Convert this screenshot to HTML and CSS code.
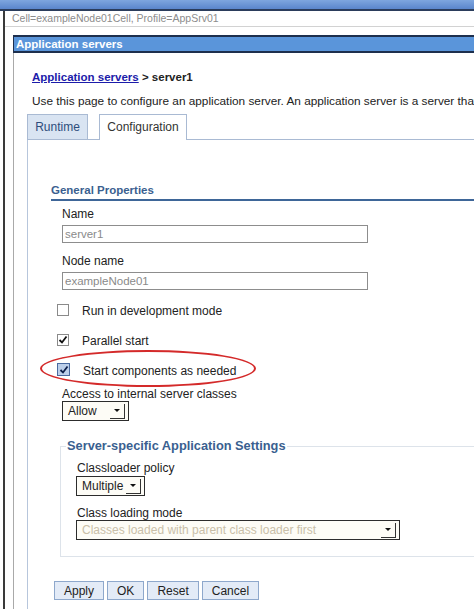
FILE: index.html
```html
<!DOCTYPE html>
<html lang="en">
<head>
  <meta charset="UTF-8" />
  <title>Application servers</title>
  <link rel="stylesheet" href="styles.css">
</head>
<body>
  <div class="titlebar"></div>
  <div class="window">
    <div class="scope">Cell=exampleNode01Cell, Profile=AppSrv01</div>

    <div class="portlet">
      <div class="portlet-title">Application servers</div>
      <div class="portlet-body">
        <div class="breadcrumb"><a href="#">Application servers</a> &gt; server1</div>
        <p class="intro">Use this page to configure an application server. An application server is a server that provides services required to run enterprise applications.</p>

        <!-- Tabs -->
        <div class="tabs">
          <div class="tab">Runtime</div>
          <div class="tab active">Configuration</div>
        </div>

        <div class="tab-panel">
          <div class="section-title">General Properties</div>
          <div class="props">
            <div class="field-label">Name</div>
            <input class="text-input" type="text" value="server1" readonly>
            <div class="field-label spaced">Node name</div>
            <input class="text-input" type="text" value="exampleNode01" readonly>

            <div class="checks">
              <div class="check-row">
                <span class="box"></span>
                <span>Run in development mode</span>
              </div>
              <div class="check-row">
                <span class="box checked">
                  <svg width="10" height="10" viewBox="0 0 10 10"><polyline points="1.5,5 4,7.5 8.5,1.5" fill="none" stroke="#111" stroke-width="1.8"/></svg>
                </span>
                <span>Parallel start</span>
              </div>
              <div class="check-row">
                <span class="box checked focus">
                  <svg width="10" height="10" viewBox="0 0 10 10"><polyline points="1.5,5 4,7.5 8.5,1.5" fill="none" stroke="#0d1f4a" stroke-width="1.8"/></svg>
                </span>
                <span>Start components as needed</span>
                <div class="highlight"></div>
              </div>
            </div>

            <div class="field-label tight">Access to internal server classes</div>
            <div class="select allow">
              <span class="select-value">Allow</span>
              <span class="select-arrow"></span>
            </div>

            <fieldset class="settings">
              <legend>Server-specific Application Settings</legend>
              <div class="field-label first">Classloader policy</div>
              <div class="select multiple">
                <span class="select-value">Multiple</span>
                <span class="select-arrow"></span>
              </div>
              <div class="field-label loose">Class loading mode</div>
              <div class="select mode disabled">
                <span class="select-value">Classes loaded with parent class loader first</span>
                <span class="select-arrow"></span>
              </div>
            </fieldset>
          </div>

          <div class="buttons">
            <button type="button">Apply</button>
            <button type="button">OK</button>
            <button type="button">Reset</button>
            <button type="button">Cancel</button>
          </div>
        </div>
      </div>
    </div>
  </div>
</body>
</html>
```

FILE: styles.css
```css
body {
  margin: 0;
  height: 609px;
  overflow: hidden;
  background-color: white;
  font-family: "Liberation Sans", Arial, sans-serif;
  color: #222;
}

.titlebar {
  height: 9px;
  background: linear-gradient(to bottom, #7ea6df, #5a86cc);
  border-bottom: 2px solid #2b3d5c;
}

.window {
  margin-left: 3px;
  width: 640px;
  border-left: 2px solid #3a3a3a;
  padding-bottom: 80px;
}

.scope {
  height: 15px;
  line-height: 15px;
  padding-left: 7px;
  font-size: 10.5px;
  color: #8c8c8c;
  border-bottom: 1px solid #d2d2d2;
}

.portlet {
  margin: 8px 0 0 8px;
  border-left: 1px solid #a9a9a9;
}

.portlet-title {
  margin-left: -1px;
  height: 14px;
  line-height: 14px;
  padding-left: 2px;
  background-color: #5a95da;
  border-top: 2px solid #1d2f4d;
  border-bottom: 2px solid #1d2f4d;
  border-left: 1px solid #1d2f4d;
  color: white;
  font-size: 11.5px;
  font-weight: bold;
}

.portlet-body {
  padding: 16px 0 0 13px;
}

.breadcrumb {
  padding-left: 5px;
  line-height: 16px;
  font-size: 11.5px;
  font-weight: bold;
}

.breadcrumb a {
  color: #1c1caa;
}

.intro {
  margin: 8px 0 0;
  padding-left: 5px;
  line-height: 16px;
  font-size: 11.8px;
  white-space: nowrap;
}

.tabs {
  display: flex;
  align-items: flex-end;
  gap: 11px;
  height: 25px;
  margin-top: 5px;
  border-bottom: 1px solid #a9bad3;
}

.tab {
  width: 59px;
  height: 24px;
  line-height: 24px;
  text-align: center;
  font-size: 12px;
  color: #2e4d7c;
  background-color: #d9e4f2;
  border: 1px solid #a9bad3;
  border-bottom: none;
}

.tab.active {
  width: 86px;
  height: 25px;
  margin-bottom: -1px;
  color: #333;
  background-color: white;
}

.tab-panel {
  border-left: 1px solid #b7c6dc;
  padding: 43px 0 60px 23px;
}

.section-title {
  line-height: 14px;
  padding-bottom: 2px;
  border-bottom: 2px solid #3e6698;
  font-size: 11.5px;
  font-weight: bold;
  color: #3a5f90;
}

.props {
  padding-left: 11px;
}

.field-label {
  margin-top: 6px;
  line-height: 14px;
  font-size: 12px;
}

.field-label.spaced {
  margin-top: 11px;
}

.field-label.tight {
  margin-top: 1px;
}

.text-input {
  display: block;
  box-sizing: border-box;
  width: 306px;
  height: 18px;
  margin: 4px 0 0;
  padding: 0 2px;
  border: 1px solid #8d8d8d;
  font-family: "Liberation Sans", Arial, sans-serif;
  font-size: 11.5px;
  color: #8a8a8a;
  outline: none;
}

.checks {
  margin-top: 6px;
}

.check-row {
  position: relative;
  display: flex;
  align-items: center;
  gap: 13px;
  height: 30px;
  margin-left: -5px;
  font-size: 12px;
}

.box {
  box-sizing: border-box;
  display: flex;
  align-items: center;
  justify-content: center;
  width: 12px;
  height: 12px;
  margin-bottom: 3px;
  border: 1px solid #8a8a8a;
  background-color: white;
}

.box.focus {
  width: 13px;
  height: 13px;
  border-color: #4a6aa0;
  background-color: #bccfea;
}

.highlight {
  position: absolute;
  left: -17px;
  top: -6px;
  box-sizing: border-box;
  width: 216px;
  height: 37px;
  border: 2px solid #d42a2a;
  border-radius: 50%;
}

.select {
  box-sizing: border-box;
  display: flex;
  align-items: center;
  height: 20px;
  border: 1px solid #2c2c2c;
  background-color: #fdfcf6;
  font-size: 12px;
}

.select.allow {
  width: 67px;
}

.select.multiple {
  width: 69px;
  margin-left: -1px;
}

.select.mode {
  width: 324px;
  margin-left: -1px;
}

.select-value {
  flex: 1;
  padding-left: 5px;
  white-space: nowrap;
  overflow: hidden;
}

.select.disabled .select-value {
  color: #c9bfa9;
}

.select-arrow {
  position: relative;
  box-sizing: border-box;
  width: 15px;
  height: 15px;
  margin-right: 3px;
  border-right: 1px solid #333;
  border-bottom: 1px solid #333;
}

.select-arrow::after {
  content: "";
  position: absolute;
  left: 4px;
  top: 5px;
  border-left: 3px solid transparent;
  border-right: 3px solid transparent;
  border-top: 3px solid #111;
}

.settings {
  min-width: 0;
  margin: 18px 0 0 -2px;
  padding: 0 0 16px 16px;
  border: 1px solid #dde3ea;
}

.settings legend {
  margin-left: -11px;
  padding: 0 1px;
  line-height: 14px;
  font-size: 12.8px;
  font-weight: bold;
  color: #3a5f90;
}

.field-label.first {
  margin-top: 8px;
}

.field-label.first + .select {
  margin-top: 1px;
}

.field-label.loose {
  margin-top: 10px;
}

.buttons {
  display: flex;
  gap: 3px;
  margin: 24px 0 0 3px;
}

.buttons button {
  height: 19px;
  padding: 0 9px;
  border: 1px solid #8ea8cc;
  background-color: #e3ebf7;
  font-family: "Liberation Sans", Arial, sans-serif;
  font-size: 12px;
  color: #222;
}
```
